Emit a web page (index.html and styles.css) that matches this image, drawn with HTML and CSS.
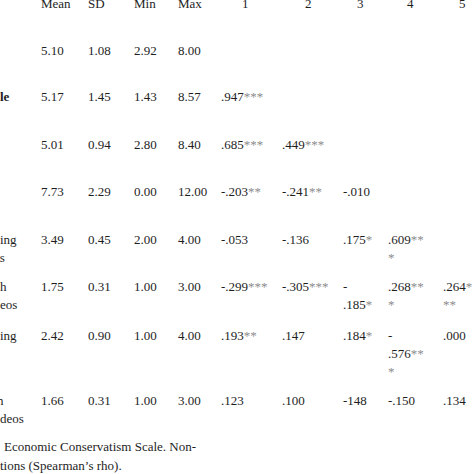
FILE: index.html
```html
<!DOCTYPE html>
<html>
<head>
<meta charset="utf-8">
<link rel="stylesheet" href="styles.css">
</head>
<body>
<div class="page">
<table class="stats">
  <colgroup>
    <col class="c-label"><col class="c-mean"><col class="c-sd"><col class="c-min"><col class="c-max">
    <col class="c-1"><col class="c-2"><col class="c-3"><col class="c-4"><col class="c-5">
  </colgroup>
  <tr class="r-head">
    <td></td><td>Mean</td><td>SD</td><td>Min</td><td>Max</td>
    <td><span class="h1">1</span></td><td><span class="h2">2</span></td><td><span class="h3">3</span></td><td><span class="h4">4</span></td><td><span class="h5">5</span></td>
  </tr>
  <tr class="r-1">
    <td></td><td>5.10</td><td>1.08</td><td>2.92</td><td>8.00</td><td></td><td></td><td></td><td></td><td></td>
  </tr>
  <tr class="r-2">
    <td class="bold">le</td><td>5.17</td><td>1.45</td><td>1.43</td><td>8.57</td><td>.947<span class="sig">***</span></td><td></td><td></td><td></td><td></td>
  </tr>
  <tr class="r-3">
    <td></td><td>5.01</td><td>0.94</td><td>2.80</td><td>8.40</td><td>.685<span class="sig">***</span></td><td>.449<span class="sig">***</span></td><td></td><td></td><td></td>
  </tr>
  <tr class="r-4">
    <td></td><td>7.73</td><td>2.29</td><td>0.00</td><td>12.00</td><td>-.203<span class="sig">**</span></td><td>-.241<span class="sig">**</span></td><td>-.010</td><td></td><td></td>
  </tr>
  <tr class="r-5">
    <td><div>ing</div><div class="cut-es">es</div></td><td>3.49</td><td>0.45</td><td>2.00</td><td>4.00</td><td>-.053</td><td>-.136</td><td>.175<span class="sig">*</span></td><td>.609<span class="sig">**</span><br><span class="sig">*</span></td><td></td>
  </tr>
  <tr class="r-6">
    <td><div>h</div><div>eos</div></td><td>1.75</td><td>0.31</td><td>1.00</td><td>3.00</td><td>-.299<span class="sig">***</span></td><td>-.305<span class="sig">***</span></td><td>-<br>.185<span class="sig">*</span></td><td>.268<span class="sig">**</span><br><span class="sig">*</span></td><td>.264<span class="sig">*</span><br><span class="sig">**</span></td>
  </tr>
  <tr class="r-7">
    <td>ing</td><td>2.42</td><td>0.90</td><td>1.00</td><td>4.00</td><td>.193<span class="sig">**</span></td><td>.147</td><td>.184<span class="sig">*</span></td><td>-<br>.576<span class="sig">**</span><br><span class="sig">*</span></td><td>.000</td>
  </tr>
  <tr class="r-8">
    <td><div class="cut-n">n</div><div>deos</div></td><td>1.66</td><td>0.31</td><td>1.00</td><td>3.00</td><td>.123</td><td>.100</td><td>-148</td><td>-.150</td><td>.134</td>
  </tr>
</table>
<p class="note">Economic Conservatism Scale. Non-<br>tions (Spearman’s rho).</p>
</div>
</body>
</html>
```

FILE: styles.css
```css
html, body {
  margin: 0;
  padding: 0;
  background: #ffffff;
  overflow: hidden;
}
body {
  width: 474px;
  height: 474px;
  font-family: "Liberation Serif", "Times New Roman", serif;
  font-size: 13px;
  line-height: 18px;
  color: #1e1e1e;
}
.page {
  width: 474px;
  height: 474px;
  overflow: hidden;
}
.stats {
  border-collapse: collapse;
  table-layout: fixed;
  width: 483px;
  margin-top: -5px;
}
.stats td {
  padding: 0;
  vertical-align: top;
  white-space: nowrap;
  overflow: visible;
}
.c-label { width: 41px; }
.c-mean { width: 47px; }
.c-sd { width: 46px; }
.c-min { width: 44px; }
.c-max { width: 43px; }
.c-1 { width: 61px; }
.c-2 { width: 61px; }
.c-3 { width: 45px; }
.c-4 { width: 55px; }
.c-5 { width: 40px; }

.r-head { height: 47px; }
.r-1 { height: 46px; }
.r-2 { height: 48px; }
.r-3 { height: 47px; }
.r-4 { height: 48px; }
.r-5 { height: 47px; }
.r-6 { height: 49px; }
.r-7 { height: 65px; }
.r-8 { height: 45px; }

.h1 { padding-left: 21px; }
.h2 { padding-left: 23px; }
.h3 { padding-left: 14px; }
.h4 { padding-left: 19px; }
.h5 { padding-left: 16px; }

.sig { color: #8c8c8c; }
.bold { font-weight: bold; }
.cut-es { margin-left: -6px; }
.cut-n { margin-left: -3px; }

.note {
  margin: 0;
  line-height: 19px;
  text-indent: 4px;
}
```
